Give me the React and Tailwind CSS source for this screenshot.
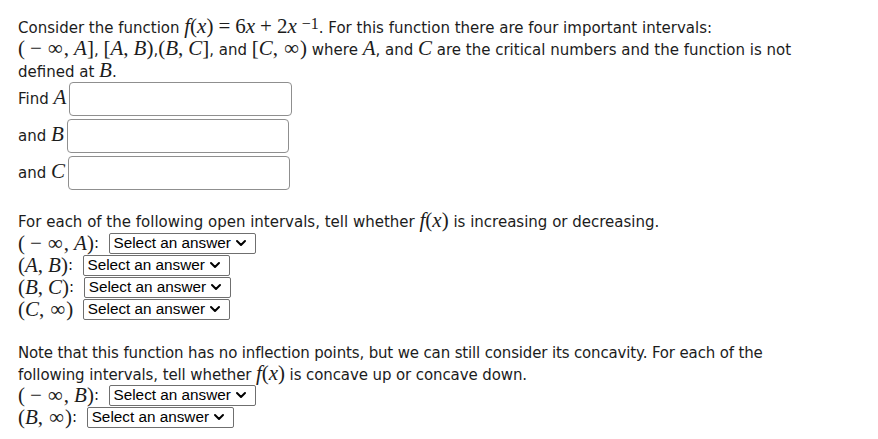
import React from 'react'
import { ChevronDown } from 'lucide-react'

const M = ({ children }) => (
  <span className="font-['Liberation_Serif',serif] text-[21px] leading-none">{children}</span>
)
const V = ({ children }) => <span className="italic">{children}</span>
const Rel = ({ children }) => <span className="mx-[5px]">{children}</span>
const Bin = ({ children }) => <span className="mx-[5px]">{children}</span>
const C = () => <span className="mr-[5px]">,</span>
const Inf = () => <span className="inline-block w-[17px] text-center">∞</span>

const Choice = () => (
  <span className="inline-flex items-center justify-between h-[21px] w-[147px] border border-[#6f6f6f] rounded-[2px] pl-[4px] pr-[6px] font-['Liberation_Sans',Arial,sans-serif] text-[15.3px] text-black bg-white">
    <span>Select an answer</span>
    <ChevronDown size={16} strokeWidth={3} />
  </span>
)

const Field = ({ label, v, width }) => (
  <div className="flex items-center gap-[3px] h-[34px]">
    <span>
      {label} <M><V>{v}</V></M>
    </span>
    <div className={`h-full ${width} border border-[#8f8f8f] rounded-[4px] bg-white`} />
  </div>
)

const Row = ({ children }) => (
  <div className="flex items-center h-[22px] whitespace-nowrap">{children}</div>
)

const NegInf = () => (
  <>
    (<Bin>−</Bin><Inf /><C />
  </>
)

export default function App() {
  return (
    <div className="w-[878px] h-[439px] bg-white text-[#1c1c1c] px-[18px] pt-[16px] font-['DejaVu_Sans',sans-serif] text-[15px] overflow-hidden">
      <div className="whitespace-nowrap">
        <div className="h-[22px] leading-[22px]">
          Consider the function <M><V>f</V>(<V>x</V>)<Rel>=</Rel>6<V>x</V><Bin>+</Bin>2<V>x</V><sup className="text-[16px] relative top-[-4px] ml-[5px]">−1</sup></M>. For this function there are four important intervals:
        </div>
        <div className="h-[22px] leading-[22px]">
          <M><NegInf /><V>A</V>]</M>, <M>[<V>A</V><C /><V>B</V>)</M>,<M>(<V>B</V><C /><V>C</V>]</M>, and <M>[<V>C</V><C /><Inf />)</M> where <M><V>A</V></M>, and <M><V>C</V></M> are the critical numbers and the function is not
        </div>
        <div className="h-[22px] leading-[22px]">
          defined at <M><V>B</V></M>.
        </div>
      </div>

      <div className="flex flex-col gap-[3px]">
        <Field label="Find" v="A" width="w-[223px]" />
        <Field label="and" v="B" width="w-[222px]" />
        <Field label="and" v="C" width="w-[222px]" />
      </div>

      <div className="mt-[20px] h-[22px] leading-[22px] whitespace-nowrap">
        For each of the following open intervals, tell whether <M><V>f</V>(<V>x</V>)</M> is increasing or decreasing.
      </div>
      <div className="flex flex-col">
        <Row><M><NegInf /><V>A</V>)</M>:&nbsp;&nbsp;<Choice /></Row>
        <Row><M>(<V>A</V><C /><V>B</V>)</M>:&nbsp;&nbsp;<Choice /></Row>
        <Row><M>(<V>B</V><C /><V>C</V>)</M>:&nbsp;&nbsp;<Choice /></Row>
        <Row><M>(<V>C</V><C /><Inf />)</M>&nbsp;&nbsp;<Choice /></Row>
      </div>

      <div className="mt-[23px] whitespace-nowrap">
        <div className="h-[20px] leading-[20px] tracking-[-0.15px]">
          Note that this function has no inflection points, but we can still consider its concavity. For each of the
        </div>
        <div className="h-[20px] leading-[20px] tracking-[-0.1px]">
          following intervals, tell whether <M><V>f</V>(<V>x</V>)</M> is concave up or concave down.
        </div>
      </div>
      <div className="flex flex-col mt-[1px]">
        <Row><M><NegInf /><V>B</V>)</M>:&nbsp;&nbsp;<Choice /></Row>
        <Row><M>(<V>B</V><C /><Inf />)</M>:&nbsp;&nbsp;<Choice /></Row>
      </div>
    </div>
  )
}
